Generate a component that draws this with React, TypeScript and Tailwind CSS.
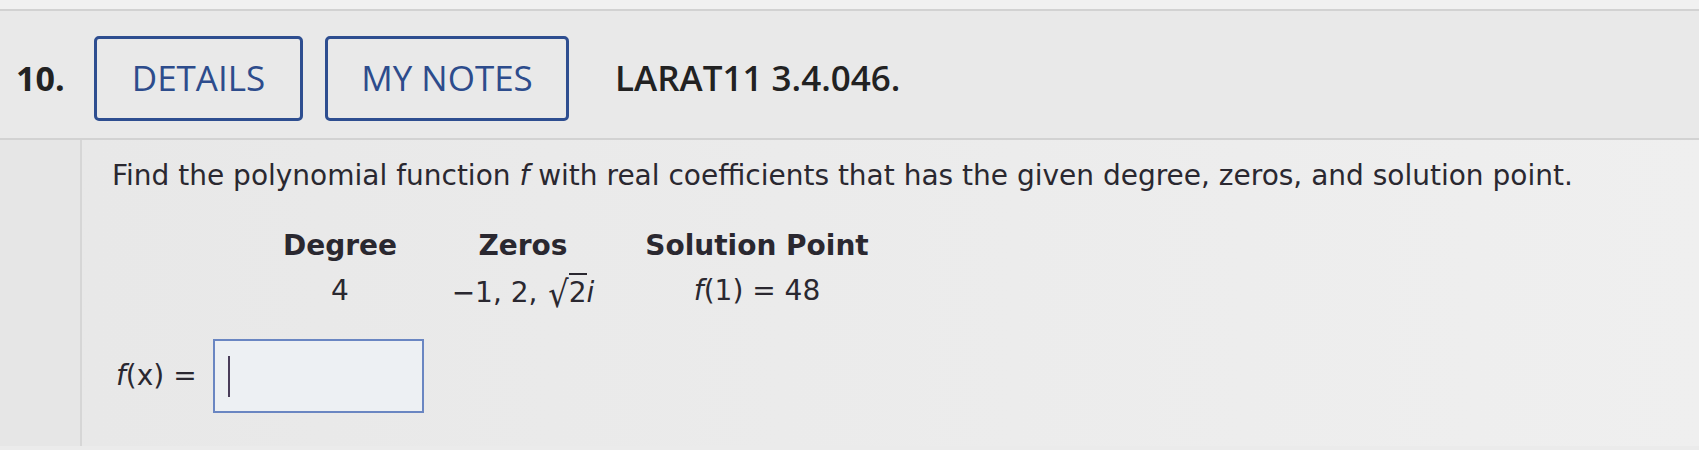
export default function App() {
  return (
    <div className="h-[450px] w-[1699px] overflow-hidden bg-[#ebebeb] text-[#2a2830]">
      {/* strip above the question header */}
      <div className="h-[11px] border-b-2 border-[#d2d2d2] bg-[#f1f1f1]" />

      {/* question header */}
      <div className="flex h-[129px] items-center border-b-2 border-[#d2d2d2] bg-[#e9e9e9] pl-[16px] pt-[7px] font-['Open_Sans',sans-serif]">
        <div className="w-[78px] text-[34px] font-bold text-[#222]">10.</div>
        <button className="flex h-[85px] w-[209px] items-center justify-center rounded-[5px] border-[3px] border-[#2e4e90] text-[35px] font-medium text-[#2d4c8c]">
          DETAILS
        </button>
        <button className="ml-[22px] flex h-[85px] w-[244px] items-center justify-center rounded-[5px] border-[3px] border-[#2e4e90] text-[35px] font-medium text-[#2d4c8c]">
          MY NOTES
        </button>
        <div className="ml-[46px] text-[35px] font-semibold text-[#222]">LARAT11 3.4.046.</div>
      </div>

      {/* question body */}
      <div className="flex h-[306px]">
        <div className="w-[82px] shrink-0 border-r-2 border-[#d6d6d6] bg-[#e6e6e6]" />
        <div className="flex-1 bg-linear-to-r from-[#e8e8e8] to-[#efefef] pl-[30px] font-['DejaVu_Sans',Verdana,sans-serif] text-[28px] leading-[34px]">
          <p className="mt-[19px]">
            Find the polynomial function <i>f</i> with real coefficients that has the given degree, zeros, and solution point.
          </p>

          <div className="mt-[36px] ml-[153px] grid grid-cols-[150px_216px_252px] gap-y-[11px] text-center">
            <div className="font-bold">Degree</div>
            <div className="font-bold">Zeros</div>
            <div className="font-bold">Solution Point</div>
            <div>4</div>
            <div>
              −1, 2, <span className="inline-block translate-y-[3px] scale-y-[1.15] pl-[2px] text-[32px]">√</span>
              <span className="border-t-2 border-[#2a2830] pt-[1px]">2</span>
              <i>i</i>
            </div>
            <div>
              <i>f</i>(1) = 48
            </div>
          </div>

          <div className="mt-[29px] flex items-center gap-[16px] pl-[4px]">
            <span>
              <i>f</i>(x) =
            </span>
            <div className="flex h-[74px] w-[211px] items-center border-2 border-[#6a86c2] bg-[#edf0f3] pl-[13px]">
              <div className="h-[41px] w-[2px] bg-[#4a3d5a]" />
            </div>
          </div>
        </div>
      </div>
    </div>
  );
}
